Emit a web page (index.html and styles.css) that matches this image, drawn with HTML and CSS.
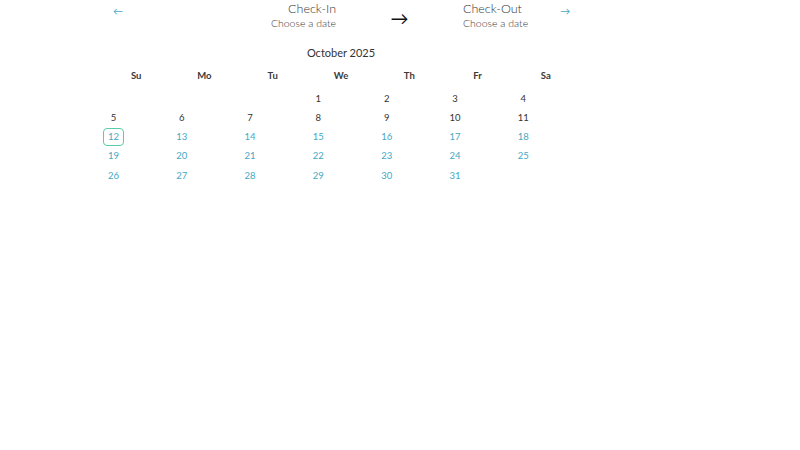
FILE: index.html
```html
<!DOCTYPE html>
<html>
<head>
<meta charset="utf-8">
<link rel="stylesheet" href="styles.css">
</head>
<body>
<div class="picker">
  <div class="top">
    <span class="nav nav-prev">←</span>
    <div class="slot slot-in">
      <div class="slot-title">Check-In</div>
      <div class="slot-sub">Choose a date</div>
    </div>
    <span class="sep">→</span>
    <div class="slot slot-out">
      <div class="slot-title">Check-Out</div>
      <div class="slot-sub">Choose a date</div>
    </div>
    <span class="nav nav-next">→</span>
  </div>
  <div class="month">October 2025</div>
  <div class="weekdays">
    <span>Su</span><span>Mo</span><span>Tu</span><span>We</span><span>Th</span><span>Fr</span><span>Sa</span>
  </div>
  <div class="days">
    <span class="blank"></span><span class="blank"></span><span class="blank"></span>
    <span class="day past">1</span><span class="day past">2</span><span class="day past">3</span><span class="day past">4</span>
    <span class="day past">5</span><span class="day past">6</span><span class="day past">7</span><span class="day past">8</span><span class="day past">9</span><span class="day past">10</span><span class="day past">11</span>
    <span class="day today">12</span><span class="day">13</span><span class="day">14</span><span class="day">15</span><span class="day">16</span><span class="day">17</span><span class="day">18</span>
    <span class="day">19</span><span class="day">20</span><span class="day">21</span><span class="day">22</span><span class="day">23</span><span class="day">24</span><span class="day">25</span>
    <span class="day">26</span><span class="day">27</span><span class="day">28</span><span class="day">29</span><span class="day">30</span><span class="day">31</span>
  </div>
</div>
</body>
</html>
```
FILE: styles.css
```css
html, body {
  margin: 0;
  padding: 0;
  background: #fff;
}
body {
  font-family: "Lato", "Open Sans", sans-serif;
  color: #333;
}
.picker {
  margin-left: 102px;
  width: 478px;
}
.top {
  display: flex;
  height: 30px;
}
.nav {
  color: #45a8c4;
  font-size: 10px;
  line-height: 22px;
}
.nav-prev {
  width: 154px;
  padding-left: 11px;
  box-sizing: border-box;
}
.nav-next {
  width: 20px;
  padding-left: 2px;
}
.slot {
  display: flex;
  flex-direction: column;
  white-space: nowrap;
  padding-top: 1px;
}
.slot-in {
  width: 82px;
  align-items: flex-end;
}
.slot-out {
  width: 96px;
  align-items: flex-start;
}
.slot-title {
  font-size: 12.5px;
  font-weight: 300;
  line-height: 15px;
  color: #333;
}
.slot-sub {
  font-size: 10.5px;
  font-weight: 300;
  line-height: 15px;
  color: #3a3a3a;
}
.sep {
  width: 128px;
  text-align: center;
  font-size: 18px;
  line-height: 36px;
  color: #111;
}
.month {
  margin-top: 15px;
  text-align: center;
  font-size: 11px;
  line-height: 16px;
  color: #333;
}
.weekdays {
  margin-top: 7px;
  display: grid;
  grid-template-columns: repeat(7, 1fr);
  font-size: 9.5px;
  font-weight: 700;
  line-height: 16px;
  text-align: center;
  color: #3a3a3a;
}
.days {
  margin-top: 5px;
  display: grid;
  grid-template-columns: repeat(7, 1fr);
  row-gap: 1.25px;
}
.day {
  margin-left: 1px;
  width: 21px;
  height: 18px;
  box-sizing: border-box;
  display: flex;
  align-items: center;
  justify-content: center;
  font-size: 9.5px;
  color: #45a8c4;
  border: 1px solid transparent;
  border-radius: 4px;
}
.day.past {
  color: #333;
}
.day.today {
  border-color: #5ccaa8;
}
.blank {
  height: 18px;
}
```
